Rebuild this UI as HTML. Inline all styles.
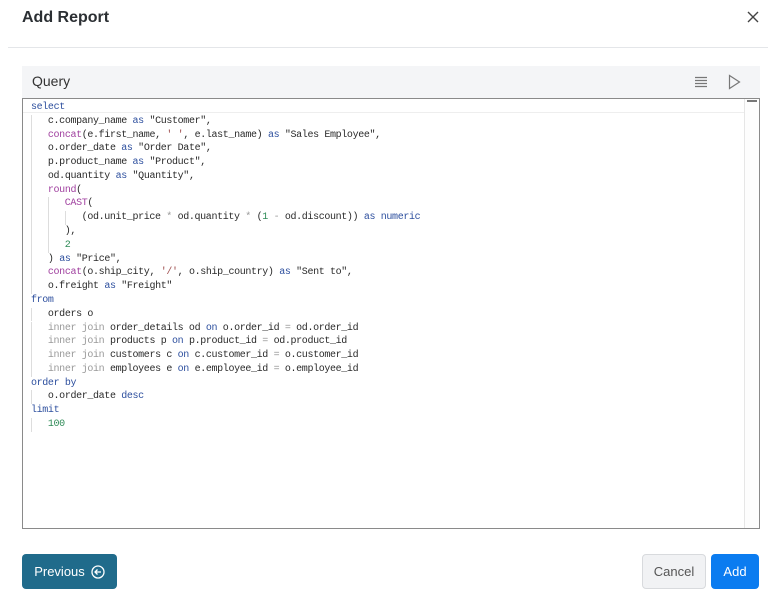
<!DOCTYPE html>
<html><head><meta charset="utf-8"><style>
*{margin:0;padding:0;box-sizing:border-box}
body{width:768px;height:595px;background:#fff;font-family:"Liberation Sans",sans-serif;position:relative;overflow:hidden;color:#222}
.title{position:absolute;left:22px;top:9px;font-size:16px;font-weight:bold;color:#2b2f33}
.close{position:absolute;left:746px;top:10px;width:14px;height:14px}
.div{position:absolute;left:8px;right:0;top:47px;height:1px;background:#e4e6e9}
.qh{position:absolute;left:22px;top:66px;width:738px;height:32px;background:#f4f5f7}
.qh span{position:absolute;left:10px;top:7px;font-size:14px;color:#333}
.ed{position:absolute;left:22px;top:98px;width:738px;height:431px;border:1px solid #8a8a8a;background:#fff}
.sb{position:absolute;right:0;top:0;width:15px;height:100%;border-left:1px solid #e6e6e6;background:#fdfdfd}
.sb:before{content:"";position:absolute;left:2px;right:2px;top:1px;height:2px;background:#777}
.al{position:absolute;left:0;right:15px;top:1px;height:13px;border-bottom:1px solid #eee}
pre{position:absolute;left:8px;top:2px;font-family:"Liberation Mono",monospace;font-size:10px;letter-spacing:-0.36px;line-height:13.78px;color:#2a2a2a}
.k{color:#2d4f9e}.f{color:#a0409f}.n{color:#2e8b57}.g{color:#999}.s{color:#a05050}
.i{border-left:1px solid #ddd;display:inline-block;width:16.9px;height:13.78px;vertical-align:top}
.btn{position:absolute;top:554px;height:35px;border-radius:4px;font-size:13px;display:flex;align-items:center;justify-content:center}
</style></head><body>
<div class="title">Add Report</div>
<svg class="close" viewBox="0 0 14 14"><path d="M2 2L12 12M12 2L2 12" stroke="#444" stroke-width="1.4"/></svg>
<div class="div"></div>
<div class="qh"><span>Query</span>
<svg style="position:absolute;left:672px;top:10px" width="14" height="12" viewBox="0 0 14 12"><path d="M1 1.5H13M1 4.5H13M1 7.5H13M1 10.5H13" stroke="#777" stroke-width="1.2"/></svg>
<svg style="position:absolute;left:706px;top:8px" width="13" height="16" viewBox="0 0 13 16"><path d="M1.5 1.5L11.5 8L1.5 14.5Z" fill="none" stroke="#777" stroke-width="1.2"/></svg>
</div>
<div class="ed"><div class="al"></div><div class="sb"></div>
<pre><span class="k">select</span>
<span class="i"></span>c.company_name <span class="k">as</span> "Customer",
<span class="i"></span><span class="f">concat</span>(e.first_name, <span class="s">' '</span>, e.last_name) <span class="k">as</span> "Sales Employee",
<span class="i"></span>o.order_date <span class="k">as</span> "Order Date",
<span class="i"></span>p.product_name <span class="k">as</span> "Product",
<span class="i"></span>od.quantity <span class="k">as</span> "Quantity",
<span class="i"></span><span class="f">round</span>(
<span class="i"></span><span class="i"></span><span class="f">CAST</span>(
<span class="i"></span><span class="i"></span><span class="i"></span>(od.unit_price <span class="g">*</span> od.quantity <span class="g">*</span> (<span class="n">1</span> <span class="g">-</span> od.discount)) <span class="k">as numeric</span>
<span class="i"></span><span class="i"></span>),
<span class="i"></span><span class="i"></span><span class="n">2</span>
<span class="i"></span>) <span class="k">as</span> "Price",
<span class="i"></span><span class="f">concat</span>(o.ship_city, <span class="s">'/'</span>, o.ship_country) <span class="k">as</span> "Sent to",
<span class="i"></span>o.freight <span class="k">as</span> "Freight"
<span class="k">from</span>
<span class="i"></span>orders o
<span class="i"></span><span class="g">inner join</span> order_details od <span class="k">on</span> o.order_id <span class="g">=</span> od.order_id
<span class="i"></span><span class="g">inner join</span> products p <span class="k">on</span> p.product_id <span class="g">=</span> od.product_id
<span class="i"></span><span class="g">inner join</span> customers c <span class="k">on</span> c.customer_id <span class="g">=</span> o.customer_id
<span class="i"></span><span class="g">inner join</span> employees e <span class="k">on</span> e.employee_id <span class="g">=</span> o.employee_id
<span class="k">order by</span>
<span class="i"></span>o.order_date <span class="k">desc</span>
<span class="k">limit</span>
<span class="i"></span><span class="n">100</span></pre>
</div>
<div class="btn" style="left:22px;width:95px;background:#206b8b;color:#fff">Previous
<svg style="margin-left:6px" width="14" height="14" viewBox="0 0 14 14"><circle cx="7" cy="7" r="6" fill="none" stroke="#fff" stroke-width="1.3"/><path d="M10 7H4M6.5 4.5L4 7L6.5 9.5" fill="none" stroke="#fff" stroke-width="1.3"/></svg></div>
<div class="btn" style="left:642px;width:64px;background:#f1f2f4;border:1px solid #d8dadd;color:#555">Cancel</div>
<div class="btn" style="left:711px;width:48px;background:#0b7cf0;color:#fff">Add</div>
</body></html>
